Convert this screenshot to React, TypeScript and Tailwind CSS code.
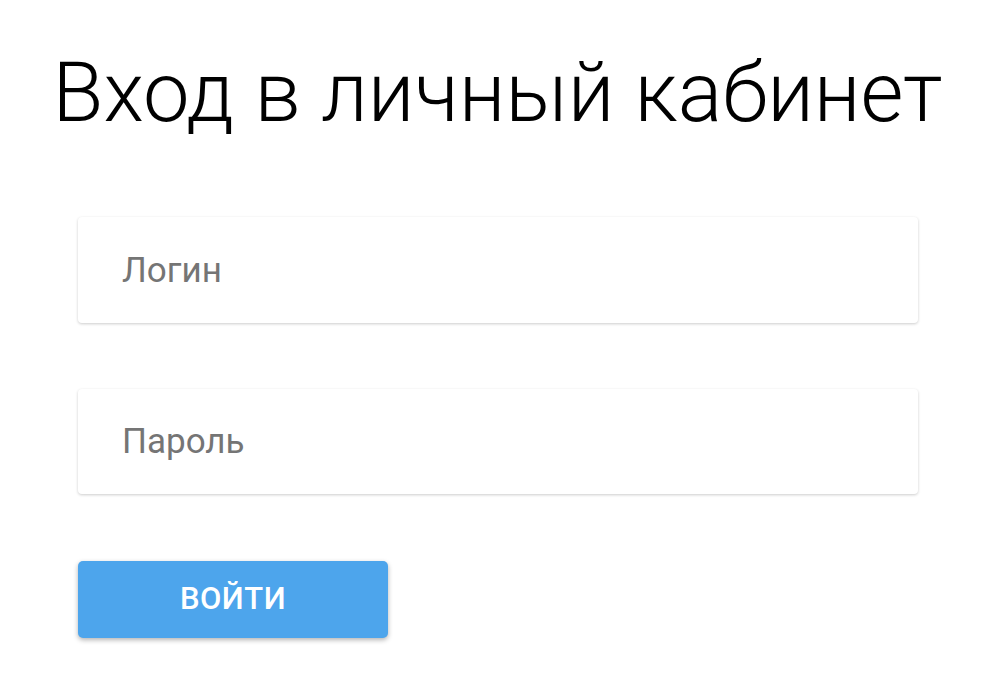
import React from "react";

export default function App() {
  return (
    <div
      className="min-h-[684px] w-[990px] bg-white"
      style={{ fontFamily: "Roboto, 'Noto Sans', sans-serif" }}
    >
      <div className="flex flex-col pt-[44px]">
        <h1 className="ml-[5px] text-center text-[83px] font-light leading-[97px] text-black">
          Вход в личный кабинет
        </h1>
        <form className="ml-[78px] mt-[76px] flex w-[840px] flex-col">
          <input
            type="text"
            placeholder="Логин"
            className="h-[106px] w-full rounded-[4px] bg-white pl-[44px] text-[35px] text-black shadow-[0_1px_3px_rgba(0,0,0,0.2)] outline-none placeholder:text-[#757575]"
          />
          <input
            type="password"
            placeholder="Пароль"
            className="mt-[66px] h-[105px] w-full rounded-[4px] bg-white pl-[44px] text-[35px] text-black shadow-[0_1px_3px_rgba(0,0,0,0.2)] outline-none placeholder:text-[#757575]"
          />
          <button
            type="button"
            className="mt-[67px] h-[77px] w-[310px] rounded-[5px] bg-[#4da5ec] text-[31px] font-medium uppercase tracking-[0.5px] text-white shadow-[0_2px_5px_rgba(0,0,0,0.3)]"
          >
            Войти
          </button>
        </form>
      </div>
    </div>
  );
}
